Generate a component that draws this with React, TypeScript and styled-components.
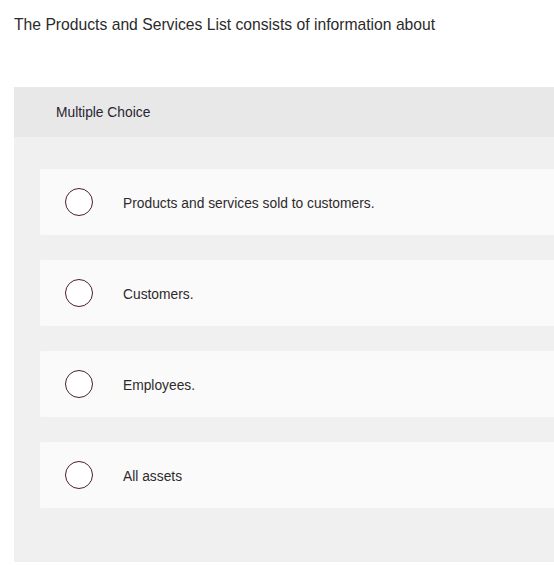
import React from 'react';
import styled, { createGlobalStyle } from 'styled-components';

const GlobalStyle = createGlobalStyle`
  html, body {
    margin: 0;
    padding: 0;
    background: #ffffff;
  }
  body {
    font-family: "Liberation Sans", Arial, sans-serif;
    color: #2d2d2d;
  }
`;

const Page = styled.div`
  width: 554px;
  padding: 14px 0 0 14px;
  box-sizing: border-box;
  overflow: hidden;
`;

const Question = styled.p`
  margin: 0;
  font-size: 15.7px;
  line-height: 21px;
  color: #2b2b2b;
`;

const Panel = styled.section`
  margin-top: 52px;
  background: #f0f0f0;
  width: 560px;
`;

const PanelHeader = styled.div`
  height: 50px;
  background: #e8e8e8;
  display: flex;
  align-items: center;
  padding-left: 42px;
  padding-top: 1px;
  box-sizing: border-box;
  font-size: 13.8px;
  color: #2a2430;
`;

const Options = styled.div`
  display: flex;
  flex-direction: column;
  gap: 25px;
  padding: 32px 0 54px 26px;
`;

const OptionCard = styled.label`
  height: 66px;
  background: #fafafa;
  border-radius: 2px 0 0 2px;
  display: flex;
  align-items: center;
  padding-left: 25px;
  cursor: pointer;
`;

const Radio = styled.span`
  width: 28px;
  height: 28px;
  box-sizing: border-box;
  border: 1.5px solid #4a1f2b;
  border-radius: 50%;
  background: #ffffff;
  flex-shrink: 0;
`;

const OptionText = styled.span`
  margin-left: 30px;
  padding-top: 2px;
  font-size: 13.8px;
  color: #2e2a2c;
`;

const choices = [
  'Products and services sold to customers.',
  'Customers.',
  'Employees.',
  'All assets',
];

const App: React.FC = () => {
  return (
    <>
      <GlobalStyle />
      <Page>
        <Question>The Products and Services List consists of information about</Question>
        <Panel>
          <PanelHeader>Multiple Choice</PanelHeader>
          <Options>
            {choices.map((c) => (
              <OptionCard key={c}>
                <Radio />
                <OptionText>{c}</OptionText>
              </OptionCard>
            ))}
          </Options>
        </Panel>
      </Page>
    </>
  );
};

export default App;
